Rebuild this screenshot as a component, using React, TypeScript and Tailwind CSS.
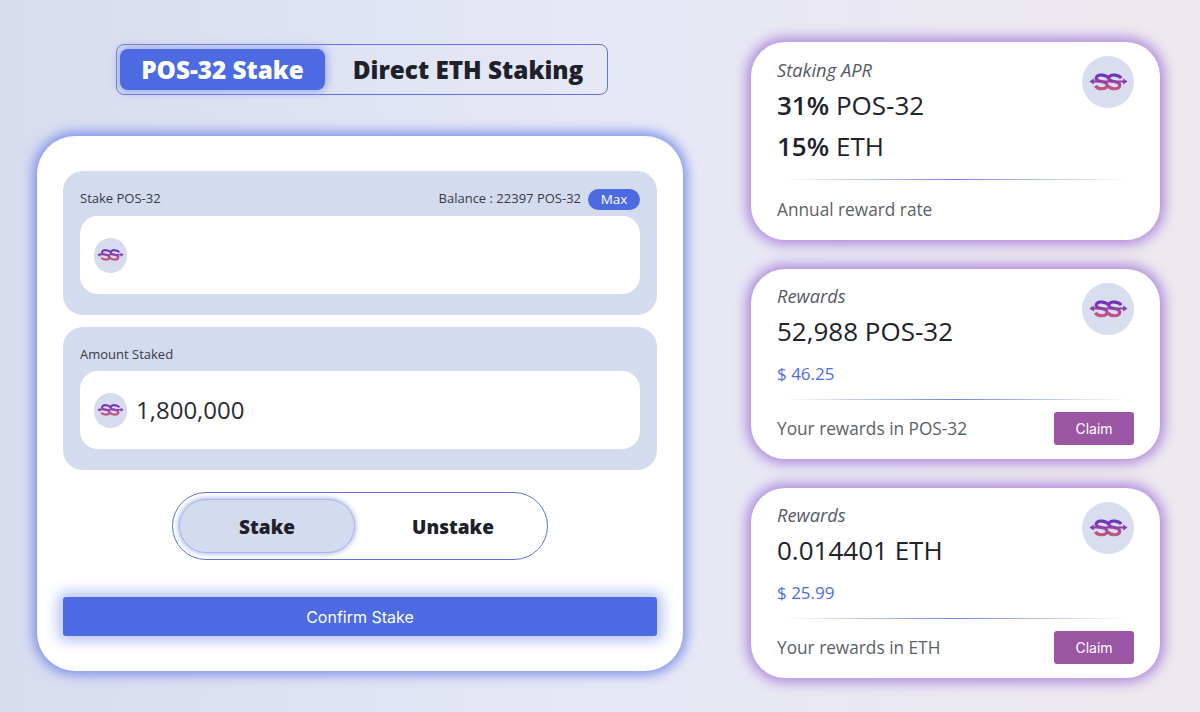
const Logo = ({ size }: { size: "sm" | "lg" }) => (
  <div className={size === "lg" ? "w-[52px] h-[52px] rounded-full bg-[#d8ddf0] flex items-center justify-center shrink-0" : "w-[33px] h-[35px] rounded-full bg-[#d6dbed] flex items-center justify-center shrink-0"}>
    <svg viewBox="0 0 40 20" className={size === "lg" ? "w-[39px] h-[20px]" : "w-[27px] h-[14px]"} fill="none">
      <defs>
        <linearGradient id="knot" gradientUnits="userSpaceOnUse" x1="0" y1="1" x2="0" y2="19">
          <stop offset="0" stopColor="#5f2fc4" />
          <stop offset="0.5" stopColor="#9a3fa6" />
          <stop offset="1" stopColor="#d05c72" />
        </linearGradient>
      </defs>
      <path d="M2 9.5h36" stroke="#8a3fa8" strokeWidth="2" />
      <path d="M0.5 9.5l4.5-3v6zM39.5 9.5l-4.5-3v6z" fill="#8a3fa8" />
      <path d="M20 6C18 3 9 1 7.5 5.5 6 11 19 8 18.5 13.5 18 18 9 18 6.5 14" stroke="url(#knot)" strokeWidth="3.2" />
      <path d="M33 6C31 3 22 1 20.5 5.5 19 11 32 8 31.5 13.5 31 18 22 18 19.5 14" stroke="url(#knot)" strokeWidth="3.2" />
    </svg>
  </div>
);

const Divider = () => (
  <div className="h-px mx-[6px] bg-gradient-to-r from-transparent via-[#6f86dc] to-transparent" />
);

const InfoCard = ({ label, value, usd, footer }: { label: string; value: string; usd: string; footer: string }) => (
  <div className="h-[190px] rounded-[34px] bg-white shadow-[0_0_13px_4px_#ab84dc] px-[26px] pt-[15px] relative">
    <div className="absolute right-[26px] top-[14px]"><Logo size="lg" /></div>
    <div className="text-[18.3px] leading-[24px] italic text-[#555a63]">{label}</div>
    <div className="text-[26px] leading-[36px] mt-[5px] text-[#20232b]">{value}</div>
    <div className="text-[17px] leading-[24px] mt-[13px] text-[#4f6ce0]">{usd}</div>
    <div className="mt-[13px]"><Divider /></div>
    <div className="flex items-center justify-between mt-[12px]">
      <span className="text-[17.25px] text-[#5b5f66]">{footer}</span>
      <button className="w-[80px] h-[33px] rounded-[3px] bg-[#9a55a3] text-white text-[14px] font-['Inter',sans-serif]">Claim</button>
    </div>
  </div>
);

export default function App() {
  return (
    <div className="w-[1200px] h-[712px] overflow-hidden flex pl-[37px] pt-[42px] bg-gradient-to-r from-[#d7dcef] via-[#e6e8f6] to-[#eee9ee] font-['Open_Sans',sans-serif]">
      <div className="w-[646px] mt-[2px] flex flex-col items-center">
        <div className="w-[492px] h-[51px] ml-[4px] rounded-[8px] border border-[#5f72d6] flex items-center py-[4px] pl-[3px] pr-[4px] text-[24.3px] font-extrabold text-[#1e2129]">
          <div className="w-[205px] h-[41px] pt-[2px] rounded-[8px] bg-[#4c6ae2] text-white flex items-center justify-center shadow-[0_0_8px_2px_#9aaaf0]">POS-32 Stake</div>
          <div className="flex-1 text-center pl-[8px] pt-[2px]">Direct ETH Staking</div>
        </div>

        <div className="w-[646px] h-[535px] mt-[41px] rounded-[38px] bg-white shadow-[0_0_12px_4px_#7f92ea] px-[26px] pt-[35px]">
          <div className="h-[144px] rounded-[20px] bg-[#d5dbee] px-[17px] pt-[18px]">
            <div className="flex items-center justify-between h-[20px] text-[13px] text-[#343945]">
              <span>Stake POS-32</span>
              <div className="flex items-center gap-[7px]">
                <span>Balance : 22397 POS-32</span>
                <span className="w-[52px] h-[21px] rounded-full bg-[#4c6ae2] text-white text-[13.5px] flex items-center justify-center">Max</span>
              </div>
            </div>
            <div className="h-[78px] mt-[7px] rounded-[18px] bg-white flex items-center pl-[14px]">
              <Logo size="sm" />
            </div>
          </div>

          <div className="h-[143px] mt-[12px] rounded-[20px] bg-[#d5dbee] px-[17px] pt-[18px]">
            <div className="h-[20px] flex items-center text-[13px] text-[#343945]">Amount Staked</div>
            <div className="h-[78px] mt-[6px] rounded-[18px] bg-white flex items-center pl-[14px] gap-[9px]">
              <Logo size="sm" />
              <span className="text-[24px] text-[#2a2d35]">1,800,000</span>
            </div>
          </div>

          <div className="w-[376px] h-[68px] mx-auto mt-[22px] rounded-full border border-[#5f72d6] flex items-center p-[6px] text-[19px] font-extrabold text-[#1e2129]">
            <div className="w-[176px] h-[54px] pt-[2px] rounded-full bg-[#d5dbee] border border-[#a9b6ee] shadow-[0_0_5px_1px_#a9b6ee] flex items-center justify-center">Stake</div>
            <div className="flex-1 text-center pl-[10px] pt-[2px]">Unstake</div>
          </div>

          <button className="w-full h-[39px] mt-[37px] rounded-[3px] bg-[#4c6ae2] text-white text-[16px] font-['Inter',sans-serif] shadow-[0_0_14px_5px_#b4c0f5]">Confirm Stake</button>
        </div>
      </div>

      <div className="w-[409px] ml-[68px] flex flex-col">
        <div className="h-[198px] rounded-[34px] bg-white shadow-[0_0_13px_4px_#ab84dc] px-[26px] pt-[16px] relative">
          <div className="absolute right-[26px] top-[14px]"><Logo size="lg" /></div>
          <div className="text-[18.3px] leading-[24px] italic text-[#555a63]">Staking APR</div>
          <div className="text-[26px] leading-[36px] mt-[5px] text-[#20232b]"><span className="font-semibold">31%</span> POS-32</div>
          <div className="text-[26px] leading-[36px] mt-[5px] text-[#20232b]"><span className="font-semibold">15%</span> ETH</div>
          <div className="mt-[15px]"><Divider /></div>
          <div className="text-[17.25px] leading-[24px] mt-[18px] text-[#5b5f66]">Annual reward rate</div>
        </div>
        <div className="mt-[29px]"><InfoCard label="Rewards" value="52,988 POS-32" usd="$ 46.25" footer="Your rewards in POS-32" /></div>
        <div className="mt-[29px]"><InfoCard label="Rewards" value="0.014401 ETH" usd="$ 25.99" footer="Your rewards in ETH" /></div>
      </div>
    </div>
  );
}
